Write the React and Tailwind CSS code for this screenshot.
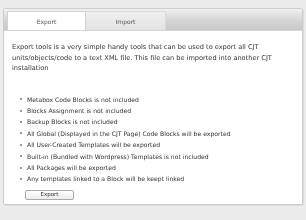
export default function App() {
  const items = [
    'Metabox Code Blocks is not included',
    'Blocks Assignment is not included',
    'Backup Blocks is not included',
    'All Global (Displayed in the CJT Page) Code Blocks will be exported',
    'All User-Created Templates will be exported',
    'Built-in (Bundled with Wordpress) Templates is not included',
    'All Packages will be exported',
    'Any templates linked to a Block will be keept linked',
  ];

  return (
    <div
      className="w-[306px] h-[220px] bg-[#ececec] pt-[8px] px-[3px] text-[#333] antialiased [will-change:transform]"
      style={{ fontFamily: '"DejaVu Sans", Verdana, sans-serif' }}
    >
      <div className="h-[197px] bg-white border border-[#cdcdcd] rounded-[2px] shadow-[1px_1px_1px_rgba(0,0,0,0.08)]">
        <div className="h-[22px] flex items-end pl-[3px] pr-px border-b border-[#d6d6d6] bg-gradient-to-b from-[#f0f0f0] via-[#d6d6d6] to-[#c8c8c8]">
          <div className="w-[79px] h-[19px] bg-white border border-b-0 border-[#d2d2d2] flex items-center justify-center text-[6px] text-[#555]">
            Export
          </div>
          <div className="w-[80px] h-[19px] bg-gradient-to-b from-[#f0f0f0] to-[#e2e2e2] border-r border-t border-[#dadada] flex items-center justify-center text-[6px] text-[#555]">
            Import
          </div>
        </div>

        <div className="px-[8px] pt-[11px]">
          <p className="text-[6.6px] leading-[10.5px]">
            Export tools is a very simple handy tools that can be used to export all CJT
            units/objects/code to a text XML file. This file can be imported into another CJT
            installation
          </p>

          <ul className="mt-[20px] pl-[8px] flex flex-col">
            {items.map((item, i) => (
              <li key={i} className="flex items-center text-[6.1px] leading-[11.4px]">
                <span className="w-[2px] h-[2px] rounded-full bg-[#777] mr-[5px] shrink-0" />
                {item}
              </li>
            ))}
          </ul>

          <button className="mt-[5px] ml-[13px] w-[49px] h-[10px] rounded-[2px] border border-[#aaa] bg-gradient-to-b from-white to-[#ececec] text-[5.5px] leading-none text-[#333] flex items-center justify-center">
            Export
          </button>
        </div>
      </div>
    </div>
  );
}
